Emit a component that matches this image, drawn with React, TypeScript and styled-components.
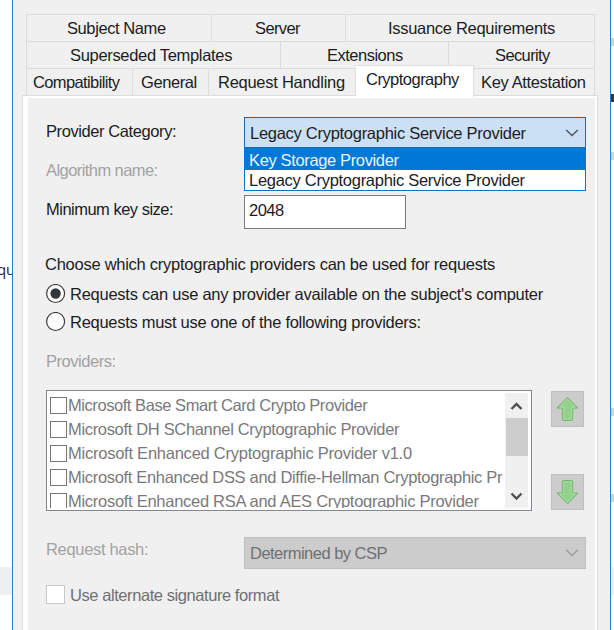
import React from "react";
import styled, { createGlobalStyle } from "styled-components";

const GlobalStyle = createGlobalStyle`
  *, *::before, *::after { box-sizing: border-box; }
  body { margin: 0; background: #fff; overflow: hidden; }
`;

const Desktop = styled.div`
  display: flex;
  width: 614px;
  height: 630px;
  overflow: hidden;
  background: #fff;
  font: 16.5px/20px "Liberation Sans", Arial, sans-serif;
  color: #1c1c22;
`;

const Strip = styled.div<{ $width: number }>`
  flex: none;
  display: flex;
  flex-direction: column;
  width: ${(p) => p.$width}px;
  overflow: hidden;
`;

const StripSpace = styled.div<{ $h: number }>`
  flex: none;
  height: ${(p) => p.$h}px;
`;

const StripBand = styled.div`
  flex: none;
  height: 28px;
  background: #efefef;
`;

const StripText = styled.div`
  flex: none;
  height: 20px;
  margin-left: -3px;
  white-space: nowrap;
  font: 15px/20px "Open Sans", sans-serif;
  letter-spacing: -0.3px;
  color: #24242c;
`;

const StripMark = styled.div<{ $dark?: boolean }>`
  flex: none;
  width: 3px;
  height: 8px;
  background: ${(p) => (p.$dark ? "#3f3039" : "linear-gradient(90deg, #b9dcf0, #e0cfa8)")};
`;

const Dialog = styled.main`
  flex: none;
  width: 599px;
  height: 630px;
  padding: 14px 12px 0 9px;
  border: solid #1883d7;
  border-width: 0 1px;
  background: #f0f0f0;
`;

const TabStrip = styled.div`
  width: 569px;
  margin-left: 4px;
`;

const TabRow = styled.div`
  display: flex;
  height: 27px;
  border-left: 1px solid #dcdcdc;
`;

const Tab = styled.div<{ $w: number; $active?: boolean }>`
  flex: none;
  position: relative;
  width: ${(p) => p.$w}px;
  height: ${(p) => (p.$active ? 32 : 27)}px;
  margin-top: ${(p) => (p.$active ? -3 : 0)}px;
  padding-top: ${(p) => (p.$active ? 3 : 3)}px;
  border-top: 1px solid #dcdcdc;
  border-right: 1px solid #dcdcdc;
  background: ${(p) => (p.$active ? "#fff" : "#f0f0f0")};
  z-index: ${(p) => (p.$active ? 1 : 0)};
`;

const Text = styled.span<{ $ls: number; $indent?: number; $tone?: string }>`
  display: block;
  flex: none;
  height: 20px;
  margin-left: ${(p) => p.$indent ?? 0}px;
  letter-spacing: ${(p) => p.$ls}px;
  white-space: pre;
  color: ${(p) => p.$tone ?? "inherit"};
`;

const Panel = styled.section`
  width: 576px;
  height: 540px;
  padding: 18px 8px 0 19px;
  border: 1px solid #dcdcdc;
  border-bottom: 0;
  box-shadow: inset 5px 0 #fff, inset -2px 2px #fff;
`;

const Field = styled.div<{ $h: number; $gap: number; $labelTop: number }>`
  display: grid;
  grid-template-columns: 202px 1fr;
  align-items: start;
  height: ${(p) => p.$h}px;
  margin-top: ${(p) => p.$gap}px;
  > span:first-child { margin-top: ${(p) => p.$labelTop}px; }
`;

const Combo = styled.div<{ $disabled?: boolean }>`
  position: relative;
  display: flex;
  justify-content: space-between;
  width: 342px;
  height: ${(p) => (p.$disabled ? 32 : 31)}px;
  padding: 5px 6px 0 5px;
  border: 1px solid ${(p) => (p.$disabled ? "#bfbfbf" : "#2866a4")};
  background: ${(p) => (p.$disabled ? "#cccccc" : "#cce0f5")};
`;

const Chevron = styled.svg`
  flex: none;
  width: 14px;
  height: 8px;
  margin-top: 6px;
  fill: none;
`;

const Menu = styled.div`
  position: absolute;
  top: 30px;
  left: -1px;
  width: 342px;
  height: 43px;
  border: 1px solid #0078d7;
  background: #fff;
  z-index: 2;
`;

const Option = styled.div<{ $selected?: boolean }>`
  height: ${(p) => (p.$selected ? 21 : 20)}px;
  padding-top: ${(p) => (p.$selected ? 1 : 0)}px;
  color: ${(p) => (p.$selected ? "#e8f5ff" : "inherit")};
  background: ${(p) => (p.$selected ? "#0078d7" : "#fff")};
`;

const Input = styled.div`
  width: 162px;
  height: 34px;
  padding: 4px 0 0 4px;
  border: 1px solid #7a7a7a;
  background: #fff;
`;

const Line = styled.div<{ $gap: number; $inset?: number }>`
  display: flex;
  height: 20px;
  margin-top: ${(p) => p.$gap}px;
  padding-left: ${(p) => p.$inset ?? 4}px;
`;

const Radio = styled.svg`
  flex: none;
  width: 20px;
  height: 20px;
  margin-right: 4px;
`;

const CheckBox = styled.span<{ $size: number; $tone: string }>`
  flex: none;
  width: ${(p) => p.$size}px;
  height: ${(p) => p.$size}px;
  border: 1px solid ${(p) => p.$tone};
  background: #fff;
`;

const Providers = styled.div`
  display: flex;
  gap: 19px;
  height: 121px;
  margin: 19px 0 0 4px;
`;

const ListBox = styled.div`
  flex: none;
  display: flex;
  justify-content: space-between;
  width: 486px;
  height: 121px;
  padding: 2px 3px 2px 3px;
  border: 1px solid #828790;
  background: #fff;
`;

const List = styled.div`
  width: 455px;
  height: 115px;
  overflow: hidden;
  color: #79797c;
`;

const ListRow = styled.div`
  display: flex;
  align-items: flex-start;
  height: 24px;
  padding-top: 2px;
  > span:first-child { margin-top: 2px; }
`;

const ScrollBar = styled.div`
  display: flex;
  flex-direction: column;
  align-items: center;
  width: 23px;
  height: 115px;
  background: #f0f0f0;
`;

const ScrollArrow = styled.svg`
  flex: none;
  width: 23px;
  height: 25px;
  fill: none;
  stroke: #505050;
  stroke-width: 2.4;
`;

const Thumb = styled.div`
  flex: none;
  width: 22px;
  height: 38px;
  margin-bottom: 27px;
  background: #cdcdcd;
`;

const MoveColumn = styled.div`
  display: flex;
  flex-direction: column;
  justify-content: space-between;
  padding: 1px 0;
`;

const MoveButton = styled.div`
  display: flex;
  align-items: center;
  justify-content: center;
  width: 33px;
  height: 36px;
  border: 1px solid #bfbfbf;
  background: #cccccc;
`;

const Arrow = styled.svg<{ $down?: boolean }>`
  width: 23px;
  height: 26px;
  transform: ${(p) => (p.$down ? "rotate(180deg)" : "none")};
`;

type TabDef = [label: string, width: number, indent: number, spacing: number];

const tabRows: TabDef[][] = [
  [["Subject Name", 185, 40, -0.41], ["Server", 134, 43, -0.62], ["Issuance Requirements", 249, 42, -0.3]],
  [["Superseded Templates", 254, 43, -0.32], ["Extensions", 168, 46, -0.5], ["Security", 146, 46, -0.62]],
  [["Compatibility", 106, 6, -0.62], ["General", 76, 8, -0.42], ["Request Handling", 147, 9, -0.27], ["Cryptography", 118, 10, -0.52], ["Key Attestation", 121, 7, -0.36]],
];

const providers: [string, number][] = [
  ["Microsoft Base Smart Card Crypto Provider", -0.44],
  ["Microsoft DH SChannel Cryptographic Provider", -0.33],
  ["Microsoft Enhanced Cryptographic Provider v1.0", -0.24],
  ["Microsoft Enhanced DSS and Diffie-Hellman Cryptographic Pr", -0.32],
  ["Microsoft Enhanced RSA and AES Cryptographic Provider", -0.28],
];

const ComboArrow = ({ stroke }: { stroke: string }) => (
  <Chevron viewBox="0 0 14 8">
    <path d="M1.2 1 7 6.6 12.8 1" stroke={stroke} strokeWidth="1.4" />
  </Chevron>
);

const RadioButton = ({ checked }: { checked?: boolean }) => (
  <Radio viewBox="0 0 20 20">
    <circle cx="9.6" cy="9.5" r="9" fill="#fff" stroke="#3c3c3c" strokeWidth="1.2" />
    {checked && <circle cx="9.6" cy="9.5" r="5.2" fill="#333638" />}
  </Radio>
);

const MoveArrow = ({ down }: { down?: boolean }) => (
  <MoveButton>
    <Arrow $down={down} viewBox="0 0 23 26">
      <path d="M11.5 1.2 22 12H16.7V23.2Q16.7 24.5 15.4 24.5H7.6Q6.3 24.5 6.3 23.2V12H1Z" fill="#91d18b" stroke="#76b56d" strokeWidth="1" strokeLinejoin="round" />
      <path d="M11.5 3.2 19.2 11H15.5V23H7.7V11H3.8Z" fill="none" stroke="#a9dd9f" strokeWidth="1" />
    </Arrow>
  </MoveButton>
);

export default function App() {
  return (
    <>
      <GlobalStyle />
      <Desktop>
        <Strip $width={12}>
          <StripSpace $h={259} />
          <StripText>qu</StripText>
          <StripSpace $h={288} />
          <StripBand />
        </Strip>
        <Dialog>
          <TabStrip>
            {tabRows.map((row, i) => (
              <TabRow key={i}>
                {row.map(([label, w, indent, ls]) => (
                  <Tab key={label} $w={w} $active={label === "Cryptography"}>
                    <Text $ls={ls} $indent={indent}>{label}</Text>
                  </Tab>
                ))}
              </TabRow>
            ))}
          </TabStrip>
          <Panel>
            <Field $h={31} $gap={3} $labelTop={4}>
              <Text $ls={-0.41} $indent={4}>Provider Category:</Text>
              <Combo>
                <Text $ls={-0.28}>Legacy Cryptographic Service Provider</Text>
                <ComboArrow stroke="#4c5560" />
                <Menu>
                  <Option $selected><Text $ls={-0.36} $indent={4}>Key Storage Provider</Text></Option>
                  <Option><Text $ls={-0.28} $indent={4}>Legacy Cryptographic Service Provider</Text></Option>
                </Menu>
              </Combo>
            </Field>
            <Field $h={20} $gap={12} $labelTop={0}>
              <Text $ls={-0.57} $indent={4} $tone="#a2a2a2">Algorithm name:</Text>
            </Field>
            <Field $h={34} $gap={15} $labelTop={4}>
              <Text $ls={-0.51} $indent={4}>Minimum key size:</Text>
              <Input><Text $ls={-0.51}>2048</Text></Input>
            </Field>
            <Line $gap={25} $inset={3}>
              <Text $ls={-0.26}>Choose which cryptographic providers can be used for requests</Text>
            </Line>
            <Line $gap={10}>
              <RadioButton checked />
              <Text $ls={-0.25}>Requests can use any provider available on the subject's computer</Text>
            </Line>
            <Line $gap={8}>
              <RadioButton />
              <Text $ls={-0.29}>Requests must use one of the following providers:</Text>
            </Line>
            <Line $gap={19}>
              <Text $ls={-0.47} $tone="#a2a2a2">Providers:</Text>
            </Line>
            <Providers>
              <ListBox>
                <List>
                  {providers.map(([name, ls]) => (
                    <ListRow key={name}>
                      <CheckBox $size={17} $tone="#77777a" />
                      <Text $ls={ls} $indent={1}>{name}</Text>
                    </ListRow>
                  ))}
                </List>
                <ScrollBar>
                  <ScrollArrow viewBox="0 0 23 25"><path d="M6.5 16 11.5 11 16.5 16" /></ScrollArrow>
                  <Thumb />
                  <ScrollArrow viewBox="0 0 23 25"><path d="M6.5 10.5 11.5 15.5 16.5 10.5" /></ScrollArrow>
                </ScrollBar>
              </ListBox>
              <MoveColumn>
                <MoveArrow />
                <MoveArrow down />
              </MoveColumn>
            </Providers>
            <Field $h={32} $gap={26} $labelTop={2}>
              <Text $ls={-0.32} $indent={4} $tone="#a2a2a2">Request hash:</Text>
              <Combo $disabled>
                <Text $ls={-0.52} $tone="#6f6f73">Determined by CSP</Text>
                <ComboArrow stroke="#9b9b9b" />
              </Combo>
            </Field>
            <Line $gap={16}>
              <CheckBox $size={19} $tone="#c8c8c8" />
              <Text $ls={-0.43} $indent={5} $tone="#6f6f73">Use alternate signature format</Text>
            </Line>
          </Panel>
        </Dialog>
        <Strip $width={3}>
          <StripSpace $h={38} />
          <StripMark />
          <StripSpace $h={48} />
          <StripMark $dark />
          <StripSpace $h={50} />
          <StripMark />
          <StripSpace $h={248} />
          <StripMark />
          <StripSpace $h={78} />
          <StripMark />
          <StripSpace $h={65} />
          <StripBand />
        </Strip>
      </Desktop>
    </>
  );
}
